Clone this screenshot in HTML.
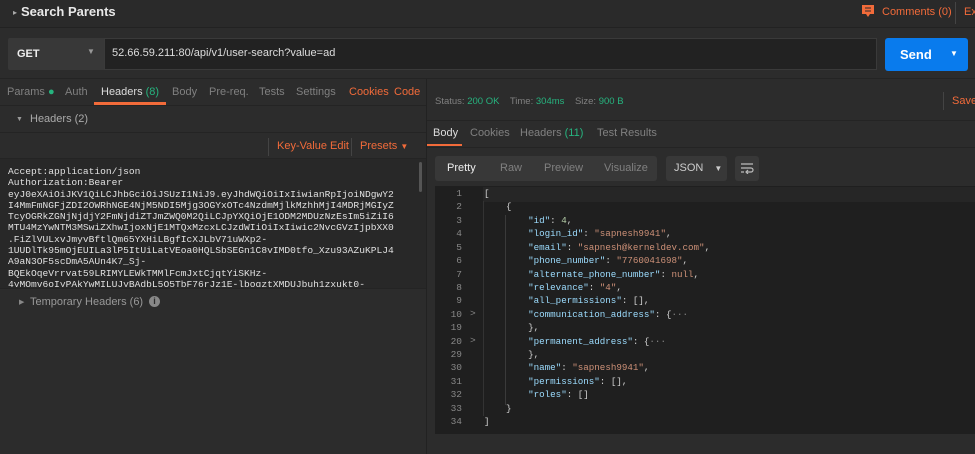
<!DOCTYPE html>
<html><head><style>
*{margin:0;padding:0;box-sizing:border-box}
body{width:975px;height:454px;background:#2c2c2c;font-family:"Liberation Sans",sans-serif;color:#c8c8c8;position:relative;overflow:hidden;font-size:11px}
.a{position:absolute;white-space:nowrap}
.or{color:#f26b3a}.gr{color:#26b47f}.dim{color:#808080}
.mono{font-family:"Liberation Mono",monospace}
.k{color:#9cdcfe}.s{color:#ce9178}
</style></head><body>
<div class="a" style="left:0;top:0;width:975px;height:28px;background:#2a2a2a;border-bottom:1px solid #222"></div>
<div class="a" style="left:13px;top:8px;font-size:8px;color:#aaa">&#9656;</div>
<div class="a" style="left:21px;top:4px;font-size:13px;color:#e8e8e8;font-weight:bold">Search Parents</div>
<svg class="a" style="left:862px;top:5px" width="12" height="13"><path d="M0 0h12v9H8l-2 3-2-3H0z" fill="#f26b3a"/><path d="M3 3h6M3 6h6" stroke="#2a2a2a" stroke-width="1"/></svg>
<div class="a or" style="left:882px;top:6px;font-size:11px">Comments (0)</div>
<div class="a" style="left:955px;top:2px;width:1px;height:22px;background:#444"></div>
<div class="a or" style="left:964px;top:6px;font-size:11px">Ex</div>

<div class="a" style="left:8px;top:38px;width:96px;height:32px;background:#383838;border-radius:2px 0 0 2px"></div>
<div class="a" style="left:17px;top:48px;font-size:11px;color:#eee;font-weight:bold">GET</div>
<div class="a" style="left:87px;top:47px;font-size:8px;color:#999">&#9660;</div>
<div class="a" style="left:104px;top:38px;width:773px;height:32px;background:#222;border:1px solid #3a3a3a"></div>
<div class="a" style="left:112px;top:47px;font-size:11px;color:#ddd">52.66.59.211:80/api/v1/user-search?value=ad</div>
<div class="a" style="left:885px;top:38px;width:83px;height:33px;background:#097bed;border-radius:3px"></div>
<div class="a" style="left:900px;top:47px;font-size:13px;color:#fff;font-weight:bold">Send</div>
<div class="a" style="left:950px;top:49px;font-size:8px;color:#fff">&#9660;</div>
<div class="a" style="left:0;top:78px;width:975px;height:1px;background:#242424"></div>

<div class="a" style="left:426px;top:79px;width:1px;height:375px;background:#222"></div>
<div class="a dim" style="left:7px;top:86px;font-size:11px">Params <span class="gr">●</span></div>
<div class="a dim" style="left:65px;top:86px">Auth</div>
<div class="a" style="left:101px;top:86px;color:#ddd">Headers <span class="gr">(8)</span></div>
<div class="a" style="left:94px;top:102px;width:72px;height:3px;background:#f26b3a"></div>
<div class="a dim" style="left:172px;top:86px">Body</div>
<div class="a dim" style="left:209px;top:86px">Pre-req.</div>
<div class="a dim" style="left:259px;top:86px">Tests</div>
<div class="a dim" style="left:296px;top:86px">Settings</div>
<div class="a or" style="left:349px;top:86px">Cookies</div>
<div class="a or" style="left:394px;top:86px">Code</div>
<div class="a" style="left:0;top:105px;width:426px;height:1px;background:#242424"></div>
<div class="a" style="left:16px;top:116px;font-size:7px;color:#999">&#9660;</div>
<div class="a" style="left:30px;top:113px;color:#aaa">Headers (2)</div>
<div class="a" style="left:0;top:132px;width:426px;height:1px;background:#242424"></div>
<div class="a" style="left:268px;top:138px;width:1px;height:18px;background:#444"></div>
<div class="a or" style="left:277px;top:140px">Key-Value Edit</div>
<div class="a" style="left:351px;top:138px;width:1px;height:18px;background:#444"></div>
<div class="a or" style="left:360px;top:140px">Presets <span style="font-size:8px">&#9660;</span></div>
<div class="a" style="left:0;top:158px;width:426px;height:1px;background:#242424"></div>
<div class="a" style="left:0;top:159px;width:426px;height:129px;background:#282828"></div>
<div class="a mono" style="left:8px;top:166px;font-size:9.6px;line-height:11.3px;color:#e0e0e0;white-space:pre;height:121px;overflow:hidden">Accept:application/json
Authorization:Bearer
eyJ0eXAiOiJKV1QiLCJhbGciOiJSUzI1NiJ9.eyJhdWQiOiIxIiwianRpIjoiNDgwY2
I4MmFmNGFjZDI2OWRhNGE4NjM5NDI5Mjg3OGYxOTc4NzdmMjlkMzhhMjI4MDRjMGIyZ
TcyOGRkZGNjNjdjY2FmNjdiZTJmZWQ0M2QiLCJpYXQiOjE1ODM2MDUzNzEsIm5iZiI6
MTU4MzYwNTM3MSwiZXhwIjoxNjE1MTQxMzcxLCJzdWIiOiIxIiwic2NvcGVzIjpbXX0
.FiZlVULxvJmyvBftlQm65YXHiLBgfIcXJLbV71uWXp2-
1UUDlTk95mOjEUILa3lP5ItUiLatVEoa0HQLSbSEGn1C8vIMD0tfo_Xzu93AZuKPLJ4
A9aN3OF5scDmA5AUn4K7_Sj-
BQEkOqeVrrvat59LRIMYLEWkTMMlFcmJxtCjqtYiSKHz-
4yMOmv6oIyPAkYwMILUJyBAdbL5O5TbF76rJz1E-lboqztXMDUJbuh1zxukt0-</div>
<div class="a" style="left:419px;top:162px;width:3px;height:30px;background:#555;border-radius:2px"></div>
<div class="a" style="left:0;top:288px;width:426px;height:1px;background:#242424"></div>
<div class="a" style="left:19px;top:298px;font-size:7px;color:#888">&#9654;</div>
<div class="a" style="left:30px;top:296px;color:#999">Temporary Headers (6)</div>
<div class="a" style="left:149px;top:296px;width:11px;height:11px;border-radius:50%;background:#888;color:#2c2c2c;font-size:9px;text-align:center;line-height:11px;font-weight:bold">i</div>

<div class="a dim" style="left:435px;top:96px;font-size:9.5px">Status: <span class="gr">200 OK</span> &nbsp;&nbsp; Time: <span class="gr">304ms</span> &nbsp;&nbsp; Size: <span class="gr">900 B</span></div>
<div class="a" style="left:943px;top:92px;width:1px;height:18px;background:#444"></div>
<div class="a or" style="left:952px;top:95px">Save</div>
<div class="a" style="left:427px;top:120px;width:548px;height:1px;background:#242424"></div>
<div class="a" style="left:433px;top:127px;color:#ddd">Body</div>
<div class="a" style="left:427px;top:144px;width:35px;height:2px;background:#f26b3a"></div>
<div class="a dim" style="left:470px;top:127px">Cookies</div>
<div class="a dim" style="left:520px;top:127px">Headers <span class="gr">(11)</span></div>
<div class="a dim" style="left:597px;top:127px">Test Results</div>
<div class="a" style="left:427px;top:147px;width:548px;height:1px;background:#242424"></div>
<div class="a" style="left:435px;top:156px;width:222px;height:25px;background:#383838;border-radius:3px"></div>
<div class="a" style="left:447px;top:162px;color:#eee">Pretty</div>
<div class="a dim" style="left:500px;top:162px">Raw</div>
<div class="a dim" style="left:544px;top:162px">Preview</div>
<div class="a dim" style="left:604px;top:162px">Visualize</div>
<div class="a" style="left:666px;top:156px;width:61px;height:25px;background:#383838;border-radius:3px"></div>
<div class="a" style="left:674px;top:162px;color:#ccc">JSON <span style="font-size:8px;margin-left:8px">&#9660;</span></div>
<div class="a" style="left:735px;top:156px;width:24px;height:25px;background:#383838;border-radius:3px"></div>
<svg class="a" style="left:740px;top:162px" width="14" height="12"><path d="M1 2h12M1 6h10a2 2 0 0 1 0 4H7M1 10h3M8 8l-2 2 2 2" stroke="#bbb" fill="none" stroke-width="1.2"/></svg>
<div class="a" style="left:435px;top:186px;width:540px;height:248px;background:#1f1f1f"></div>
<div class="a" style="left:483px;top:187px;width:492px;height:15px;background:#262626"></div>
<div class="a mono" style="left:440px;top:187px;width:22px;text-align:right;font-size:9.5px;color:#888;white-space:pre;line-height:13.42px">1
2
3
4
5
6
7
8
9
10
19
20
29
30
31
32
33
34</div>
<div class="a mono" style="left:470px;top:308px;font-size:9.5px;color:#888">&gt;</div>
<div class="a mono" style="left:470px;top:335px;font-size:9.5px;color:#888">&gt;</div>
<div class="a" style="left:505px;top:215px;width:1px;height:190px;background:#3a3a3a"></div>
<div class="a" style="left:483px;top:201px;width:1px;height:215px;background:#333"></div>
<div class="a mono" style="left:484px;top:187px;font-size:9.2px;line-height:13.42px;color:#d0d0d0;white-space:pre">[
    {
        <span class="k">"id"</span>: <span style="color:#b5cea8">4</span>,
        <span class="k">"login_id"</span>: <span class="s">"sapnesh9941"</span>,
        <span class="k">"email"</span>: <span class="s">"sapnesh@kerneldev.com"</span>,
        <span class="k">"phone_number"</span>: <span class="s">"7760041698"</span>,
        <span class="k">"alternate_phone_number"</span>: <span class="s">null</span>,
        <span class="k">"relevance"</span>: <span class="s">"4"</span>,
        <span class="k">"all_permissions"</span>: [],
        <span class="k">"communication_address"</span>: {<span style="color:#888">···</span>
        },
        <span class="k">"permanent_address"</span>: {<span style="color:#888">···</span>
        },
        <span class="k">"name"</span>: <span class="s">"sapnesh9941"</span>,
        <span class="k">"permissions"</span>: [],
        <span class="k">"roles"</span>: []
    }
]</div>
</body></html>
